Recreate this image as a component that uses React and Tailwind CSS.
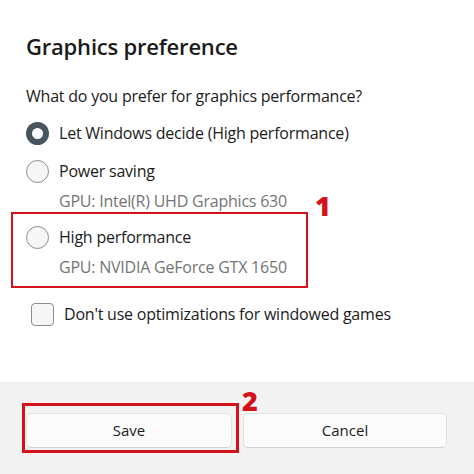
import React from "react";

const font = { fontFamily: '"Open Sans", "Noto Sans", sans-serif' };

function Radio({ checked }) {
  if (checked) {
    return (
      <div className="w-[23px] h-[23px] rounded-full bg-[#46555e] flex items-center justify-center shrink-0">
        <div className="w-[11px] h-[11px] rounded-full bg-white" />
      </div>
    );
  }
  return <div className="w-[23px] h-[23px] rounded-full border border-[#8c8c8c] bg-[#f6f6f6] shrink-0" />;
}

export default function App() {
  return (
    <div style={font} className="w-[474px] h-[474px] bg-white flex flex-col text-[#1b1b1b] overflow-hidden">
      <div className="flex-1 flex flex-col tracking-[-0.22px]">
        <div className="h-[32px] mt-[30px] pl-[26px] flex items-center text-[22px] font-semibold tracking-[-0.2px]">
          Graphics preference
        </div>
        <div className="h-[24px] mt-[22px] pl-[26px] flex items-center text-[16px]">
          What do you prefer for graphics performance?
        </div>
        <div className="h-[26px] mt-[12px] pl-[26px] flex items-center gap-[10px] text-[16px]">
          <Radio checked />
          <span>Let Windows decide (High performance)</span>
        </div>
        <div className="h-[26px] mt-[12px] pl-[26px] flex items-center gap-[10px] text-[16px]">
          <Radio />
          <span>Power saving</span>
        </div>
        <div className="h-[22px] mt-[6px] pl-[59px] flex items-center text-[16px] text-[#747474]">
          GPU: Intel(R) UHD Graphics 630
        </div>
        <div className="relative ml-[11px] w-[297px] border-2 border-[#d3121c] pt-[10px] pb-[6px] pl-[13px]">
          <div className="h-[26px] flex items-center gap-[10px] text-[16px]">
            <Radio />
            <span>High performance</span>
          </div>
          <div className="h-[26px] mt-[4px] pl-[33px] flex items-center text-[16px] text-[#747474]">
            GPU: NVIDIA GeForce GTX 1650
          </div>
          <div className="absolute left-[calc(100%+9px)] top-[-22px] text-[#d3121c] text-[27px] font-extrabold leading-none">
            1
          </div>
        </div>
        <div className="h-[24px] mt-[14px] pl-[31px] flex items-center gap-[10px] text-[16px]">
          <div className="w-[23px] h-[23px] rounded-[4px] border border-[#8c8c8c] bg-[#f6f6f6] shrink-0" />
          <span>Don't use optimizations for windowed games</span>
        </div>
      </div>
      <div className="h-[92px] bg-[#f3f3f3] border-t border-[#ebebeb] pl-[22px] pt-[20px] flex items-start gap-[4px]">
        <div className="relative w-[217px] h-[50px] border-[3px] border-[#d3121c] pt-[7px] pl-[1px]">
          <div className="w-[206px] h-[35px] rounded-[5px] bg-[#fbfbfb] border border-[#e2e2e2] border-b-[#d0d0d0] flex items-center justify-center text-[15px]">
            Save
          </div>
          <div className="absolute left-[calc(100%+6px)] top-[-19px] text-[#d3121c] text-[27px] font-extrabold leading-none">
            2
          </div>
        </div>
        <div className="mt-[10px] w-[204px] h-[35px] rounded-[5px] bg-[#fbfbfb] border border-[#e2e2e2] border-b-[#d0d0d0] flex items-center justify-center text-[15px]">
          Cancel
        </div>
      </div>
    </div>
  );
}
